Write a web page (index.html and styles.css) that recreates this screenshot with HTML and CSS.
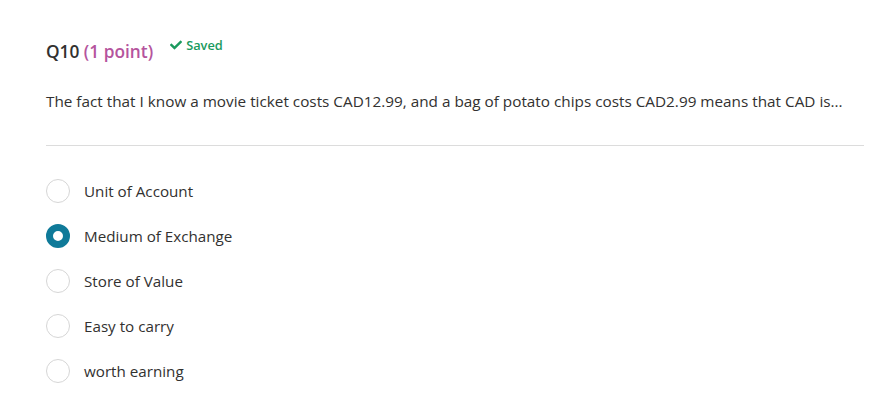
FILE: index.html
```html
<!DOCTYPE html>
<html>
<head>
<meta charset="utf-8">
<link rel="stylesheet" href="styles.css">
</head>
<body>
<div class="question">
  <div class="title-row">
    <h2 class="title">Q10 <span class="points">(1 point)</span></h2>
    <span class="saved"><svg class="check" viewBox="0 0 512 512" width="12" height="12"><path fill="#1a9a5e" d="M173.898 439.404l-166.4-166.4c-9.997-9.997-9.997-26.206 0-36.204l36.203-36.204c9.997-9.998 26.207-9.998 36.204 0L192 312.69 432.095 72.596c9.997-9.997 26.207-9.997 36.204 0l36.203 36.204c9.997 9.997 9.997 26.206 0 36.204l-294.4 294.401c-9.998 9.997-26.207 9.997-36.204-.001z"/></svg>Saved</span>
  </div>
  <p class="prompt">The fact that I know a movie ticket costs CAD12.99, and a bag of potato chips costs CAD2.99 means that CAD is...</p>
  <hr class="divider">
  <ul class="options">
    <li class="option"><span class="radio"></span><span class="label">Unit of Account</span></li>
    <li class="option"><span class="radio selected"></span><span class="label">Medium of Exchange</span></li>
    <li class="option"><span class="radio"></span><span class="label">Store of Value</span></li>
    <li class="option"><span class="radio"></span><span class="label">Easy to carry</span></li>
    <li class="option"><span class="radio"></span><span class="label">worth earning</span></li>
  </ul>
</div>
</body>
</html>
```
FILE: styles.css
```css
html, body {
  margin: 0;
  padding: 0;
  background: #fff;
}
body {
  font-family: "Open Sans", "Noto Sans", sans-serif;
  color: #323130;
}
.question {
  padding: 38px 9px 0 46px;
}
.title-row {
  display: flex;
  align-items: flex-start;
  gap: 17px;
}
.title {
  margin: 0;
  font-size: 17.3px;
  font-weight: 600;
  line-height: 28px;
  color: #323130;
}
.points {
  color: #b5549d;
  font-weight: 600;
}
.saved {
  display: flex;
  align-items: center;
  gap: 4px;
  font-size: 12.8px;
  font-weight: 600;
  color: #1a9a5e;
  line-height: 16px;
  margin-top: -1px;
}
.check {
  display: block;
}
.prompt {
  margin: 23px 0 0;
  font-size: 15.3px;
  line-height: 24px;
}
.divider {
  margin: 32px 0 0;
  border: 0;
  border-top: 1px solid #dcdcdc;
}
.options {
  list-style: none;
  margin: 33px 0 0;
  padding: 0;
  display: flex;
  flex-direction: column;
  gap: 21px;
}
.option {
  display: flex;
  align-items: center;
  gap: 14px;
  height: 24px;
}
.radio {
  box-sizing: border-box;
  width: 24px;
  height: 24px;
  border-radius: 50%;
  border: 1px solid #d6d6d6;
  background: #fff;
  flex: none;
}
.radio.selected {
  border: 7px solid #0f7a99;
}
.label {
  font-size: 15.2px;
  line-height: 20px;
}
```
